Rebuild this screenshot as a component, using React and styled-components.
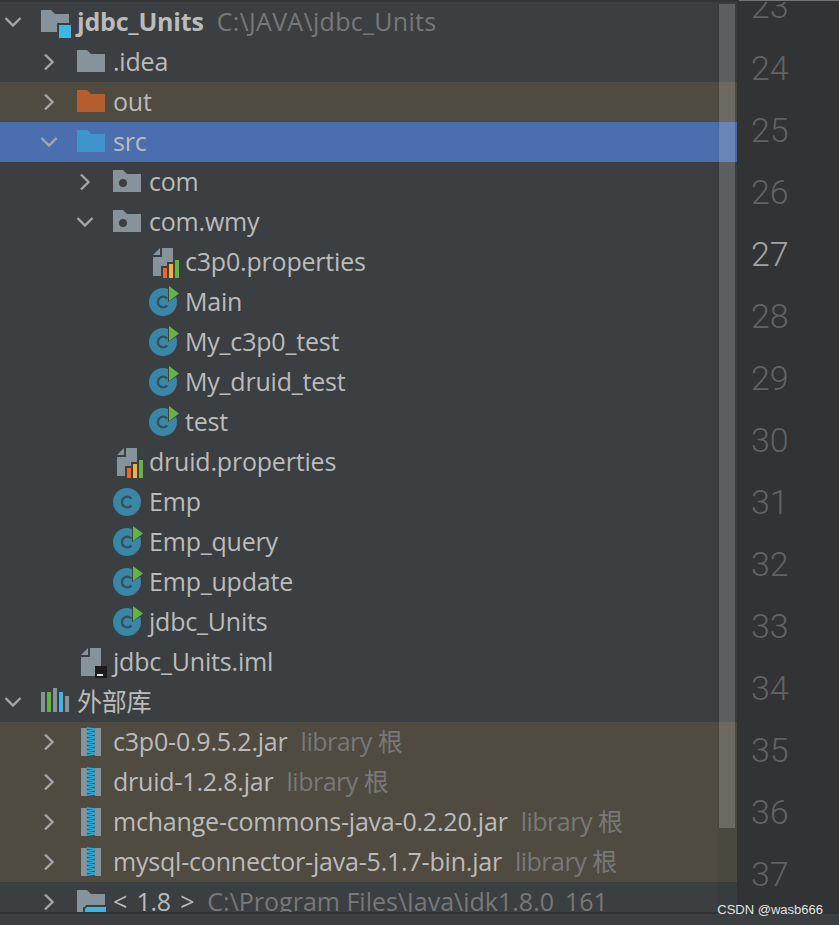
import { createGlobalStyle, styled } from "styled-components";

const GlobalStyle = createGlobalStyle`
  html, body {
    margin: 0;
    padding: 0;
    height: 925px;
    overflow: hidden;
    background: #3c3f41;
  }
`;

const GREY = "#87939a";
const PANEL = "#3c3f41";

const Icon = styled.svg.attrs({ viewBox: "0 0 36 30" })`
  width: 36px;
  height: 30px;
  flex: none;
  overflow: visible;
`;

const Chevron = ({ open }) => (
  <ChevronBox viewBox="0 0 18 18">
    <path d={open ? "M1.5 5 L9 12.5 L16.5 5" : "M5 1.5 L12.5 9 L5 16.5"} />
  </ChevronBox>
);

const FOLDER = "M0 3 H10 L14 7 H28 V25 H0 Z";

const FolderIcon = ({ fill = GREY }) => (
  <Icon>
    <path d={FOLDER} fill={fill} />
  </Icon>
);

const ProjectIcon = () => (
  <Icon>
    <path d={FOLDER} fill={GREY} />
    <rect x="16" y="16" width="16" height="16" fill={PANEL} />
    <rect x="18" y="18" width="12" height="13" fill="#3bb6e6" />
  </Icon>
);

const PackageIcon = () => (
  <Icon>
    <path d={FOLDER} fill={GREY} />
    <circle cx="10" cy="16" r="4" fill={PANEL} />
  </Icon>
);

const JdkIcon = () => (
  <Icon>
    <path d={FOLDER} fill={GREY} />
    <path d="M6 26 V20 H8 L9 18 H28 V26 Z" fill={PANEL} />
    <path d="M8 26 V22 L10 20 H29 V26 Z" fill="#3bb6e6" />
  </Icon>
);

const ClassIcon = ({ run }) => (
  <Icon>
    <circle cx="14" cy="15" r="14" fill="#3a86a6" />
    <path d="M18.4 11.6 A5.4 5.4 0 1 0 18.4 18.4" fill="none" stroke="#35505f" strokeWidth="2.4" />
    {run && (
      <>
        <path d="M19 -2 L32 6.5 L19 15 Z" fill={PANEL} />
        <path d="M20 -1 L30 6.5 L20 14 Z" fill="#62b543" />
      </>
    )}
  </Icon>
);

const FILE = "M13 1 H24 V29 H4 V10 H13 Z";
const FOLD = "M11 1 V8 H4 Z";

const PropertiesIcon = () => (
  <Icon>
    <path d={FILE} fill={GREY} />
    <path d={FOLD} fill={GREY} />
    <rect x="12" y="19" width="20" height="13" fill={PANEL} />
    <rect x="18" y="15" width="14" height="6" fill={PANEL} />
    <rect x="24" y="11" width="8" height="6" fill={PANEL} />
    <rect x="14" y="21" width="4" height="10" fill="#f26522" />
    <rect x="20" y="17" width="4" height="14" fill="#f4af3d" />
    <rect x="26" y="13" width="4" height="18" fill="#62b543" />
  </Icon>
);

const ImlIcon = () => (
  <Icon>
    <path d={FILE} fill={GREY} />
    <path d={FOLD} fill={GREY} />
    <rect x="18" y="19" width="12" height="12" fill="#1c1c1c" />
    <rect x="20" y="27" width="6" height="2" fill="#e6e6e6" />
  </Icon>
);

const LibraryIcon = () => (
  <Icon>
    <rect x="0" y="5" width="4" height="20" fill={GREY} />
    <rect x="6" y="5" width="4" height="20" fill="#62b543" />
    <rect x="12" y="1" width="4" height="24" fill={GREY} />
    <rect x="18" y="5" width="4" height="20" fill="#3bb6e6" />
    <rect x="24" y="9" width="4" height="16" fill={GREY} />
  </Icon>
);

const zip = Array.from({ length: 14 }, (_, i) => {
  const y = 2 + i * 2;
  return i % 2 ? `M10 ${y} L18 ${y - 1}` : `M10 ${y - 1} L18 ${y}`;
}).join(" ");

const JarIcon = () => (
  <Icon>
    <rect x="4" y="1" width="6" height="28" fill={GREY} />
    <rect x="18" y="1" width="6" height="28" fill={GREY} />
    <path d={zip} fill="none" stroke="#35a9d4" strokeWidth="1.3" />
  </Icon>
);

const LIB = { note: "library 根", noteSpacing: -0.5, tone: "excluded" };

const rows = [
  { depth: 0, chevron: "open", icon: <ProjectIcon />, name: "jdbc_Units", bold: true, note: "C:\\JAVA\\jdbc_Units", noteSpacing: 0.3 },
  { depth: 1, chevron: "closed", icon: <FolderIcon />, name: ".idea" },
  { depth: 1, chevron: "closed", icon: <FolderIcon fill="#b55d2c" />, name: "out", tone: "excluded" },
  { depth: 1, chevron: "open", icon: <FolderIcon fill="#3d95cb" />, name: "src", tone: "selected" },
  { depth: 2, chevron: "closed", icon: <PackageIcon />, name: "com" },
  { depth: 2, chevron: "open", icon: <PackageIcon />, name: "com.wmy" },
  { depth: 3, icon: <PropertiesIcon />, name: "c3p0.properties" },
  { depth: 3, icon: <ClassIcon run />, name: "Main" },
  { depth: 3, icon: <ClassIcon run />, name: "My_c3p0_test" },
  { depth: 3, icon: <ClassIcon run />, name: "My_druid_test" },
  { depth: 3, icon: <ClassIcon run />, name: "test" },
  { depth: 2, icon: <PropertiesIcon />, name: "druid.properties" },
  { depth: 2, icon: <ClassIcon />, name: "Emp" },
  { depth: 2, icon: <ClassIcon run />, name: "Emp_query" },
  { depth: 2, icon: <ClassIcon run />, name: "Emp_update" },
  { depth: 2, icon: <ClassIcon run />, name: "jdbc_Units" },
  { depth: 1, icon: <ImlIcon />, name: "jdbc_Units.iml" },
  { depth: 0, chevron: "open", icon: <LibraryIcon />, name: "外部库" },
  { depth: 1, chevron: "closed", icon: <JarIcon />, name: "c3p0-0.9.5.2.jar", ...LIB },
  { depth: 1, chevron: "closed", icon: <JarIcon />, name: "druid-1.2.8.jar", ...LIB },
  { depth: 1, chevron: "closed", icon: <JarIcon />, name: "mchange-commons-java-0.2.20.jar", ...LIB },
  { depth: 1, chevron: "closed", icon: <JarIcon />, name: "mysql-connector-java-5.1.7-bin.jar", ...LIB },
  { depth: 1, chevron: "closed", icon: <JdkIcon />, name: "< 1.8 >", note: "C:\\Program Files\\Java\\jdk1.8.0_161", noteSpacing: 0 },
];

const lineNumbers = Array.from({ length: 15 }, (_, i) => 23 + i);

const App = () => {
  return (
    <Window>
      <GlobalStyle />
      <TopEdge>
        <TopLine />
      </TopEdge>
      <Main>
        <Tree>
          {rows.map((row, i) => (
            <Row key={i} $depth={row.depth} $tone={row.tone}>
              <ChevronCell>{row.chevron && <Chevron open={row.chevron === "open"} />}</ChevronCell>
              {row.icon}
              <Name $bold={row.bold}>{row.name}</Name>
              {row.note && <Note $spacing={row.noteSpacing}>{row.note}</Note>}
            </Row>
          ))}
          <ScrollTrack>
            <ScrollThumb />
          </ScrollTrack>
        </Tree>
        <Gutter>
          {lineNumbers.map((n) => (
            <LineNumber key={n} $current={n === 27}>
              {n}
            </LineNumber>
          ))}
        </Gutter>
      </Main>
      <StatusStrip />
      <Watermark>CSDN @wasb666</Watermark>
    </Window>
  );
};

export default App;

const Window = styled.div`
  position: relative;
  width: 839px;
  height: 925px;
  display: flex;
  flex-direction: column;
  overflow: hidden;
  background: ${PANEL};
  font-family: "Open Sans", "Noto Sans CJK SC", sans-serif;
`;
const TopEdge = styled.div`
  height: 2px;
  flex: none;
  background: #323436;
  display: flex;
  justify-content: flex-end;
`;
const TopLine = styled.div`
  width: 100px;
  height: 1px;
  background: #6f7578;
`;
const Main = styled.div`
  display: flex;
  height: 910px;
  flex: none;
  overflow: hidden;
`;
const Tree = styled.div`
  position: relative;
  width: 737px;
  flex: none;
  background: ${PANEL};
`;
const Row = styled.div`
  height: 40px;
  box-sizing: border-box;
  display: flex;
  align-items: center;
  padding-left: ${(p) => 4 + p.$depth * 36}px;
  background: ${(p) =>
    p.$tone === "selected" ? "#4b6eaf" : p.$tone === "excluded" ? "#4f4b41" : "transparent"};
  white-space: nowrap;
`;
const ChevronCell = styled.div`
  width: 37px;
  flex: none;
  display: flex;
`;
const ChevronBox = styled.svg`
  width: 18px;
  height: 18px;
  overflow: visible;

  & path {
    fill: none;
    stroke: #a3a5a6;
    stroke-width: 2.4;
  }
`;
const Name = styled.span`
  padding-bottom: 2px;
  font-size: 25px;
  line-height: 38px;
  letter-spacing: -0.2px;
  word-spacing: 3px;
  color: #bbbbbb;
  font-weight: ${(p) => (p.$bold ? 700 : 400)};
`;
const Note = styled.span`
  margin-left: 13px;
  padding-bottom: 2px;
  font-size: 25px;
  line-height: 38px;
  letter-spacing: ${(p) => p.$spacing}px;
  color: #787878;
`;
const ScrollTrack = styled.div`
  position: absolute;
  top: 0;
  right: 0;
  bottom: 0;
  width: 20px;
  background: rgba(0, 0, 0, 0.04);
`;
const ScrollThumb = styled.div`
  margin: 2px 2px 0;
  height: 824px;
  background: rgba(255, 255, 255, 0.18);
`;
const Gutter = styled.div`
  flex: 1;
  background: #313335;
  padding-left: 14px;
  font-family: "Roboto", sans-serif;
`;
const LineNumber = styled.div`
  height: 62px;
  line-height: 62px;
  font-size: 34px;
  font-weight: 300;
  color: ${(p) => (p.$current ? "#a4a3a3" : "#606366")};

  &:first-child {
    margin-top: -27px;
  }
`;
const StatusStrip = styled.div`
  flex: 1;
  background: ${PANEL};
  border-top: 2px solid #323232;
`;
const Watermark = styled.div`
  position: absolute;
  right: 16px;
  bottom: 8px;
  font-family: "Liberation Sans", sans-serif;
  font-size: 13px;
  color: #e4e4e4;
`;
